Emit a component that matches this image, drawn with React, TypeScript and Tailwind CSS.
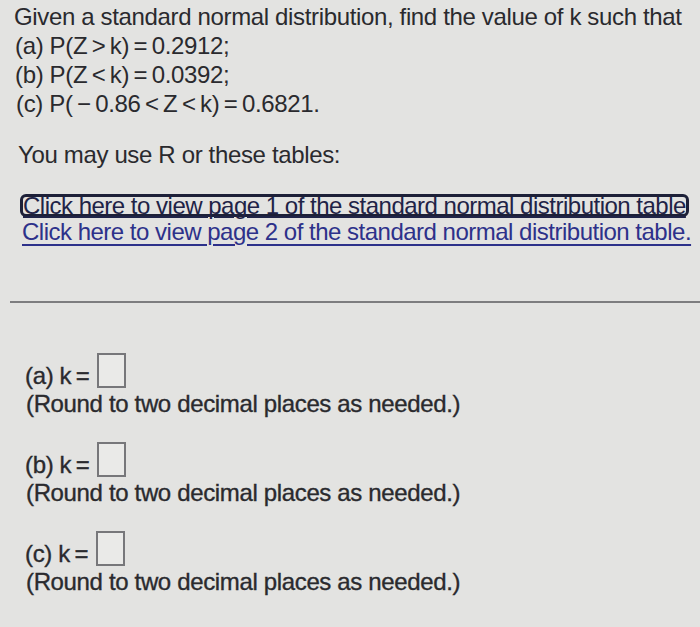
import React from "react";

function Box() {
  return <span className="block w-[29px] h-[35px] border-2 border-[#77777a] bg-[#eaeae8] ml-[8px]" />;
}

function Answer({ label }: { label: string }) {
  return (
    <div className="flex flex-col">
      <div className="flex items-end h-[35px]">
        <span className="leading-[24px]">({label}) k{"\u2009"}=</span>
        <Box />
      </div>
      <div className="mt-[3px] leading-[26px] ml-[1px]">(Round to two decimal places as needed.)</div>
    </div>
  );
}

const T = "\u2009";

export default function App() {
  return (
    <div
      className="w-[700px] h-[627px] bg-[#e3e3e1] text-[#2a2a2e] overflow-hidden text-[24px] tracking-[-0.35px]"
      style={{ fontFamily: '"Liberation Sans", Arial, sans-serif' }}
    >
      <div className="pt-[2px] pl-[14px] leading-[29px]">
        <div>Given a standard normal distribution, find the value of k such that</div>
        <div className="pl-[1px]">(a) P(Z{T}&gt;{T}k){T}={T}0.2912;</div>
        <div className="pl-[1px]">(b) P(Z{T}&lt;{T}k){T}={T}0.0392;</div>
        <div className="pl-[2px]">(c) P({T}−{T}0.86{T}&lt;{T}Z{T}&lt;{T}k){T}={T}0.6821.</div>
        <div className="mt-[22px] ml-[4px]">You may use R or these tables:</div>
        <div className="mt-[25px] ml-[6px] flex flex-col items-start tracking-[-0.5px]">
          <span className="border-[3px] border-[#1d2038] rounded-[6px] leading-[17px] text-[#1f2347] underline decoration-[1.5px] underline-offset-[2px]">
            Click here to view page 1 of the standard normal distribution table
          </span>
          <span className="mt-[3px] leading-[24px] text-[#2d318a] underline decoration-[1.5px] underline-offset-[4px] ml-[2px]">
            Click here to view page 2 of the standard normal distribution table.
          </span>
        </div>
      </div>
      <div className="mt-[57px] ml-[10px] h-[2px] bg-[#7d7d7f]" />
      <div className="pl-[25px] pt-[50px] flex flex-col gap-[25px] [-webkit-text-stroke:0.35px_#2a2a2e]">
        <Answer label="a" />
        <Answer label="b" />
        <Answer label="c" />
      </div>
    </div>
  );
}
